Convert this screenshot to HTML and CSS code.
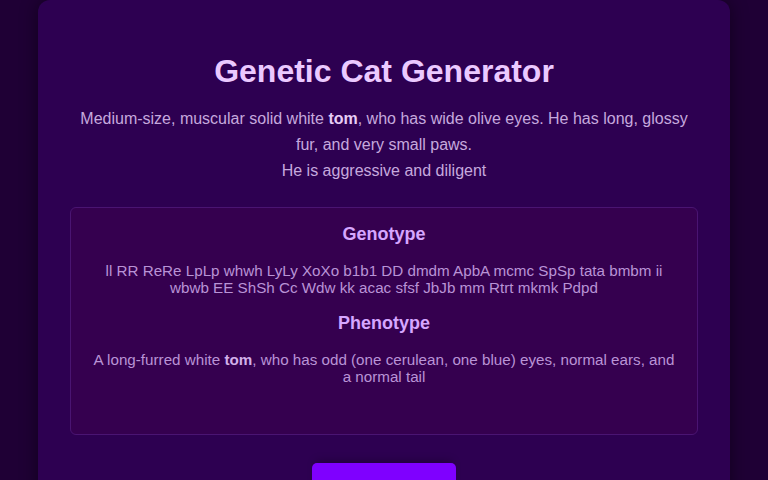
FILE: index.html
```html
<!DOCTYPE html>
<html lang="en">
<head>
<meta charset="utf-8">
<title>Genetic Cat Generator</title>
<link rel="stylesheet" href="styles.css">
</head>
<body>
  <main class="app">
    <h1 class="app-title">Genetic Cat Generator</h1>
    <p class="summary">
      Medium-size, muscular solid white <strong>tom</strong>, who has wide olive eyes. He has long, glossy fur, and very small paws.<br>
      He is aggressive and diligent
    </p>

    <section class="details">
      <h3 class="details-heading">Genotype</h3>
      <p class="details-text">ll RR ReRe LpLp whwh LyLy XoXo b1b1 DD dmdm ApbA mcmc SpSp tata bmbm ii wbwb EE ShSh Cc Wdw kk acac sfsf JbJb mm Rtrt mkmk Pdpd</p>
      <h3 class="details-heading">Phenotype</h3>
      <p class="details-text">A long-furred white <strong>tom</strong>, who has odd (one cerulean, one blue) eyes, normal ears, and a normal tail</p>
    </section>

    <div class="actions">
      <button class="generate-btn" type="button">Generate Cat</button>
    </div>
  </main>
</body>
</html>
```

FILE: styles.css
```css
* {
  box-sizing: border-box;
}

html,
body {
  margin: 0;
  background: #1f0035;
  font-family: "Liberation Sans", Arial, sans-serif;
}

.app {
  width: 90%;
  margin: 0 auto;
  padding: 32px 32px 40px;
  background: #2d0051;
  border-radius: 12px;
  box-shadow: 0 0 18px rgba(0, 0, 0, 0.45);
  text-align: center;
}

.app-title {
  margin: 21px 0 16px;
  font-size: 32px;
  font-weight: 700;
  line-height: 37px;
  color: #ebc9ff;
}

.summary {
  margin: 0 0 23px;
  font-size: 16px;
  line-height: 26px;
  color: #c6a9de;
}

.summary strong {
  color: #e6cdf6;
}

.details {
  padding: 16px 22px 32px;
  background: #35004f;
  border: 1px solid #4a1472;
  border-radius: 6px;
}

.details-heading {
  margin: 0 0 17px;
  font-size: 18px;
  line-height: 21px;
  font-weight: 700;
  color: #d6a6ff;
}

.details-text {
  margin: 0 0 17px;
  font-size: 0.95rem;
  line-height: 17px;
  color: #b993d6;
}

.details-text strong {
  color: #d2b0ea;
}

.actions {
  margin-top: 28px;
}

.generate-btn {
  min-width: 144px;
  padding: 19px 20px;
  border: none;
  border-radius: 5px;
  background: #7f00ff;
  color: #ffffff;
  font-family: inherit;
  font-size: 16px;
  font-weight: 700;
  box-shadow: 0 -6px 8px -4px rgba(0, 0, 0, 0.25);
  cursor: pointer;
}
```
